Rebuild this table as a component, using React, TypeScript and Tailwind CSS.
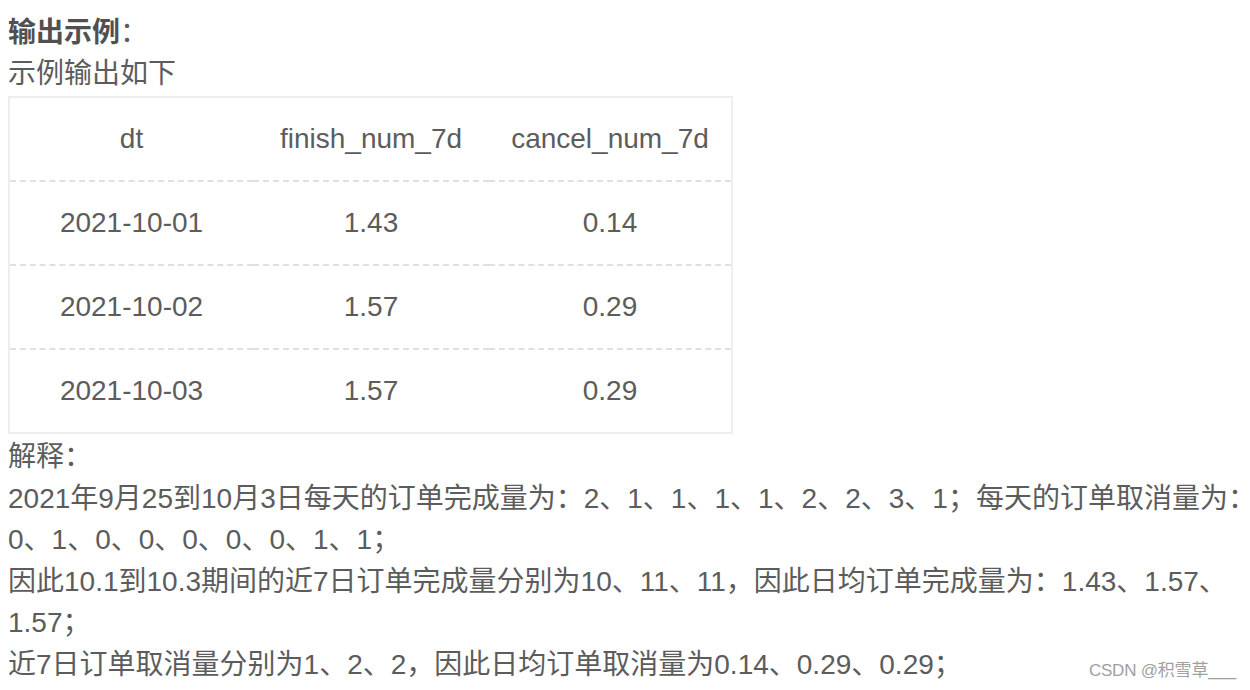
const rows = [
  ['2021-10-01', '1.43', '0.14'],
  ['2021-10-02', '1.57', '0.29'],
  ['2021-10-03', '1.57', '0.29'],
]

const font = { fontFamily: '"Liberation Sans", Arial, "Noto Sans CJK SC", sans-serif' }

export default function App() {
  return (
    <div className="relative h-[690px] w-[1250px] overflow-hidden bg-white pl-2 pt-[12px] text-[28px] text-[#5c5c5c]" style={font}>
      <p className="leading-[41px]">
        <strong className="font-bold text-[#505050]">输出示例</strong>：
      </p>
      <p className="leading-[41px]">示例输出如下</p>

      <table className="mt-[2px] border-collapse border-2 border-[#eeeeee]">
        <thead>
          <tr className="h-[84px] border-b-2 border-dashed border-[#e0e0e0]">
            <th className="w-[244px] font-normal">dt</th>
            <th className="w-[236px] font-normal">finish_num_7d</th>
            <th className="w-[243px] font-normal">cancel_num_7d</th>
          </tr>
        </thead>
        <tbody>
          {rows.map((r, i) => (
            <tr
              key={r[0]}
              className={i < rows.length - 1 ? 'h-[84px] border-b-2 border-dashed border-[#e0e0e0]' : 'h-[84px]'}
            >
              {r.map((c, j) => (
                <td key={j} className="text-center">
                  {c}
                </td>
              ))}
            </tr>
          ))}
        </tbody>
      </table>

      <div className="mt-[2px] leading-[41.5px]">
        <p>解释：</p>
        <p className="whitespace-nowrap">
          2021年9月25到10月3日每天的订单完成量为：2、1、1、1、1、2、2、3、1；每天的订单取消量为<span className="tracking-[-14px]">：</span>
          <br />
          0、1、0、0、0、0、0、1、1；
        </p>
        <p className="pr-2">因此10.1到10.3期间的近7日订单完成量分别为10、11、11，因此日均订单完成量为：1.43、1.57、1.57；</p>
        <p>近7日订单取消量分别为1、2、2，因此日均订单取消量为0.14、0.29、0.29；</p>
      </div>

      {/* watermark */}
      <div className="absolute bottom-[7px] right-[14px] text-[17px] tracking-[-0.2px] text-[#a0a0a0]">CSDN @积雪草___</div>
    </div>
  )
}
